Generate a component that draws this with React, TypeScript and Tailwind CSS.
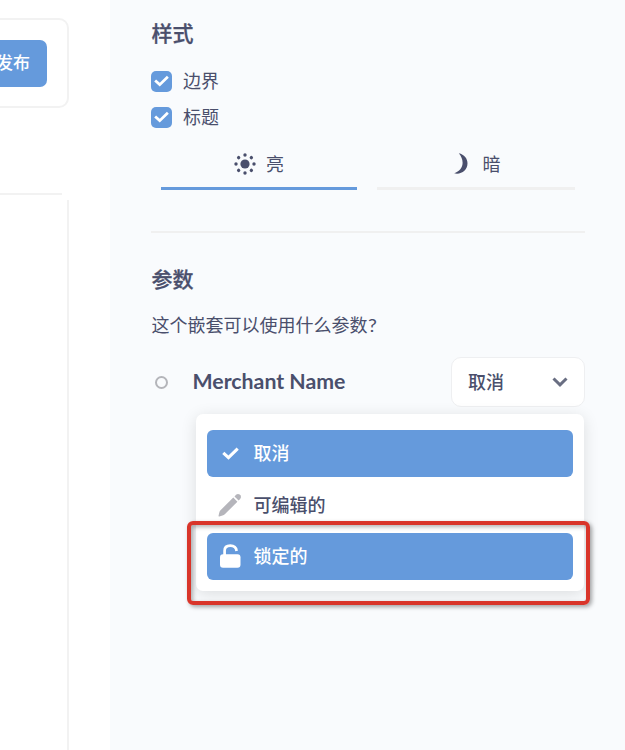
import React from "react";

const font = "font-['Lato','Noto_Sans_CJK_SC',sans-serif]";

function Check({ className }: { className?: string }) {
  return (
    <svg viewBox="0 0 17 13" fill="none" className={className}>
      <path d="M1.300 5.800 6.500 10.600 15.700 1.600" stroke="currentColor" strokeWidth="3.100" />
    </svg>
  );
}

function Sun() {
  const dots = [0, 45, 90, 135, 180, 225, 270, 315];
  return (
    <svg viewBox="0 0 22 22" className="size-[22px]" fill="currentColor">
      <circle cx="11" cy="11" r="4.6" />
      {dots.map((a) => (
        <circle key={a} cx="11" cy="2" r="1.7" transform={`rotate(${a} 11 11)`} />
      ))}
    </svg>
  );
}

function Moon() {
  return (
    <svg viewBox="0 0 14 21" className="h-[21px] w-[14px]" fill="currentColor">
      <path d="M4.800 0.300C10.300 1.600 13.500 5.600 13.500 10.300c0 6-4.800 10.400-10.500 10.400-1.100 0-1.900-.1-2.800-.4C5.300 18.300 8.600 14.600 8.600 9.700 8.600 6.200 7 3 4.800.3Z" />
    </svg>
  );
}

function Pencil() {
  return (
    <svg viewBox="0 0 24 24" className="size-6" fill="currentColor">
      <path d="M15.300 4.600 19.400 8.700 6.800 21.300Q5.900 22.300 4.500 22.600L1.300 23.500Q.4 23.600.6 22.600L1.300 19.500Q1.600 18.200 2.500 17.300Z" />
      <path d="M16.500 3.400 18 1.800Q19.900.1 21.700 1.600L22.400 2.300Q23.900 4.100 22.200 6L20.600 7.500Z" />
    </svg>
  );
}

function Lock() {
  return (
    <svg viewBox="0 0 21 24" className="h-6 w-[21px]">
      <path d="M4.600 12V6.800C4.600 3.500 7 1.700 10.300 1.700c3.600 0 5.900 1.700 6.300 5.300" fill="none" stroke="currentColor" strokeWidth="2.700" />
      <rect x="0" y="10.200" width="20.500" height="13.600" rx="3" fill="currentColor" />
    </svg>
  );
}

function CheckRow({ label }: { label: string }) {
  return (
    <div className="flex h-9 items-center">
      <span className="mr-[11px] flex size-[21px] items-center justify-center rounded-[5px] bg-[#659adc] text-white">
        <Check className="h-[12px] w-[15px]" />
      </span>
      <span className="text-[18px] leading-none">{label}</span>
    </div>
  );
}

function MenuItem({ icon, label, active }: { icon: React.ReactNode; label: string; active?: boolean }) {
  return (
    <div
      className={`flex h-[46.500px] items-center rounded-[6px] ${
        active ? "bg-[#659adc] text-white" : "text-[#4a4f6c]"
      }`}
    >
      <span className="flex w-[46px] justify-center">{icon}</span>
      <span className="pl-[0.500px] text-[18px] leading-none font-medium">{label}</span>
    </div>
  );
}

export default function App() {
  return (
    <div className={`relative flex h-[750px] w-[625px] overflow-hidden bg-white text-[#4a4f6c] ${font}`}>
      <main className="flex w-[110px] shrink-0 flex-col pt-[18px]">
        <div className="flex h-[90px] w-[69px] items-center rounded-r-[10px] border-2 border-l-0 border-[#f2f2f2]">
          <div className="flex h-[47px] w-[47px] items-center justify-end rounded-r-[7px] bg-[#659adc] pr-[17px] text-[17px] font-medium whitespace-nowrap text-white">
            发布
          </div>
        </div>
        <div className="mt-[85px] h-[2px] w-[62px] bg-[#f2f2f2]" />
        <div className="mt-[5px] w-[69px] flex-1 border-r-2 border-[#f2f2f2]" />
      </main>

      <aside className="flex flex-1 flex-col bg-[#f9fbfd] pr-10 pl-[41px]">
        <h2 className="mt-[18px] h-[30px] pl-[0.500px] text-[21px] leading-[30px] font-medium [-webkit-text-stroke:0.3px]">样式</h2>
        <div className="mt-[15px]">
          <CheckRow label="边界" />
          <CheckRow label="标题" />
        </div>
        <div className="mt-[5px] flex gap-5 px-[10px]">
          <div className="flex h-[50px] flex-1 items-center justify-center gap-[10px] border-b-[3px] border-[#659adc] text-[18px]">
            <Sun /><span className="pt-px">亮</span>
          </div>
          <div className="flex h-[50px] flex-1 items-center justify-center gap-[15px] border-b-[3px] border-[#f0f0f0] pl-[2px] text-[18px]">
            <Moon /><span className="pt-px">暗</span>
          </div>
        </div>
        <div className="mt-[41px] h-[2px] bg-[#f0f0f0]" />
        <h2 className="mt-[31px] h-[30px] pl-[0.500px] text-[21px] leading-[30px] font-medium [-webkit-text-stroke:0.3px]">参数</h2>
        <p className="mt-[18px] h-[26px] pl-[0.500px] text-[18px] leading-[26px]">
          这个嵌套可以使用什么参数<span className="inline-block origin-left scale-x-110">?</span>
        </p>
        <div className="mt-[19px] flex h-[50px] items-center">
          <span className="ml-1 size-[13px] rounded-full border-2 border-[#b4b5ba]" />
          <span className="ml-[24.500px] text-[21.300px] font-bold">Merchant Name</span>
          <div className="ml-auto flex h-[50px] w-[134px] items-center justify-between rounded-[10px] border border-[#eeeff1] bg-white pr-4 pl-4">
            <span className="text-[18px] font-medium">取消</span>
            <svg viewBox="0 0 16 10" className="h-[10px] w-4" fill="none">
              <path d="M1.500 1.500 8 7.800 14.500 1.500" stroke="#696e82" strokeWidth="3" />
            </svg>
          </div>
        </div>
      </aside>

      <div className="absolute top-[414px] left-[196px] flex h-[177px] w-[388px] flex-col gap-[5px] rounded-[7px] bg-white px-[11px] pt-4 shadow-[0_3px_16px_rgba(0,0,0,0.12)]">
        <MenuItem active label="取消" icon={<Check className="h-[13px] w-[17px]" />} />
        <MenuItem label="可编辑的" icon={<span className="text-[#b5b5bb]"><Pencil /></span>} />
        <MenuItem active label="锁定的" icon={<Lock />} />
      </div>
      <div className="absolute top-[521px] left-[187px] h-[84px] w-[403px] rounded-[6px] border-4 border-[#d9352a] shadow-[2px_2px_4px_rgba(0,0,0,0.35),inset_2px_2px_4px_rgba(0,0,0,0.3)]" />
    </div>
  );
}
